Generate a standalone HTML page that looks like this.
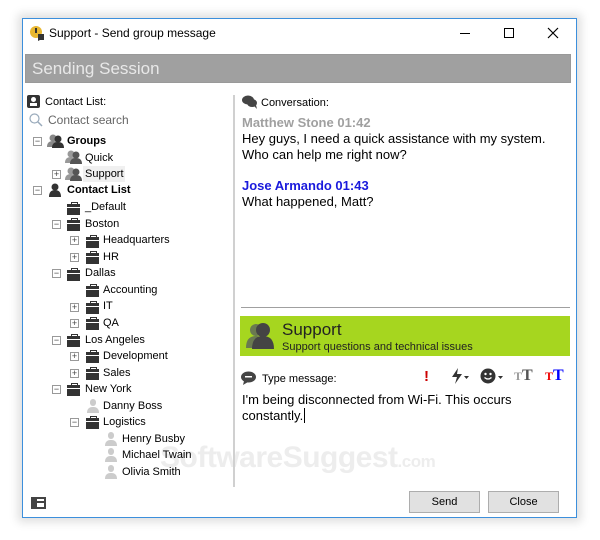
<!DOCTYPE html>
<html><head><style>
*{margin:0;padding:0;box-sizing:border-box}
body{width:600px;height:540px;background:#fff;position:relative;overflow:hidden;font-family:"Liberation Sans","DejaVu Sans",sans-serif;color:#000}
.a{position:absolute;white-space:nowrap}
.win{position:absolute;left:22px;top:18px;width:555px;height:500px;border:1px solid #3c8fdc;background:#fff;box-shadow:0 0 9px 4px rgba(0,0,0,0.13)}
.t{font-size:11px}
.box{position:absolute;width:9px;height:9px;border:1px solid #999;background:#fff;font-size:9px;line-height:7px;text-align:center;color:#444}
.bc{position:absolute;width:13px;height:10px}
.bc:before{content:"";position:absolute;left:4px;top:0;width:5px;height:3px;border:1px solid #333;border-bottom:none}
.bc:after{content:"";position:absolute;left:0;top:2px;width:13px;height:8px;background:#333;border-top:3px solid #333;box-shadow:inset 0 1px 0 #fff}
.pc{position:absolute;width:12px;height:14px}
.pc:before{content:"";position:absolute;left:3px;top:0;width:6px;height:7px;border-radius:3px;background:#ccc}
.pc:after{content:"";position:absolute;left:0;top:8px;width:12px;height:6px;border-radius:5px 5px 0 0;background:#ccc}
.btn{position:absolute;top:491px;width:71px;height:22px;border:1px solid #adadad;background:#e1e1e1;font-size:11px;text-align:center;line-height:20px}
</style></head><body>
<div class="win"></div>
<!-- watermark -->
<div class="a" style="left:160px;top:441px;font-size:30px;font-weight:bold;color:#ededed;letter-spacing:-0.5px">SoftwareSuggest<span style="font-size:17px">.com</span></div>
<!-- title -->
<svg class="a" style="left:29px;top:25px" width="16" height="16"><circle cx="7" cy="7" r="6" fill="#e8b730"/><rect x="6" y="3" width="2" height="5" fill="#333"/><path d="M9 9h6v6h-4l-2 1z" fill="#333"/></svg>
<div class="a" style="left:49px;top:26px;font-size:12px">Support - Send group message</div>
<div class="a" style="left:460px;top:33px;width:10px;height:1px;background:#000"></div>
<div class="a" style="left:504px;top:28px;width:10px;height:10px;border:1px solid #000"></div>
<svg class="a" style="left:547px;top:27px" width="12" height="12"><path d="M1 1L11 11M11 1L1 11" stroke="#000" stroke-width="1.2"/></svg>
<!-- header bar -->
<div class="a" style="left:25px;top:54px;width:546px;height:29px;background:#a0a0a0;border:1px solid #999"></div>
<div class="a" style="left:32px;top:59px;font-size:17px;color:#e8e8e8">Sending Session</div>
<!-- left panel -->
<div class="a" style="left:27px;top:95px;width:13px;height:13px;background:#333;border-radius:2px"></div>
<div class="a" style="left:31px;top:97px;width:5px;height:5px;background:#fff;border-radius:3px"></div>
<div class="a" style="left:30px;top:103px;width:7px;height:3px;background:#fff"></div>
<div class="a t" style="left:45px;top:96px">Contact List:</div>
<svg class="a" style="left:29px;top:113px" width="14" height="14"><circle cx="5.5" cy="5.5" r="4.5" fill="none" stroke="#9ab" stroke-width="1.2"/><path d="M9 9l4 4" stroke="#9ab" stroke-width="1.5"/></svg>
<div class="a" style="left:48px;top:113px;font-size:12px;color:#666">Contact search</div>
<div class="a" style="left:233px;top:95px;width:2px;height:392px;background:#d0d0d0"></div>

<!-- tree -->
<div class="box" style="left:33px;top:137px">−</div>
<svg class="a" style="left:47px;top:134px" width="18" height="14"><circle cx="6" cy="4" r="3.5" fill="#888"/><path d="M0 13q0-6 6-6q6 0 6 6z" fill="#888"/><circle cx="11" cy="5" r="3.5" fill="#333"/><path d="M5 14q0-6 6-6q6 0 6 6z" fill="#333"/></svg>
<div class="a t" style="left:67px;top:135px;font-weight:bold">Groups</div>
<svg class="a" style="left:65px;top:150px" width="18" height="14"><circle cx="6" cy="4" r="3.5" fill="#999"/><path d="M0 13q0-6 6-6q6 0 6 6z" fill="#999"/><circle cx="11" cy="5" r="3.5" fill="#555"/><path d="M5 14q0-6 6-6q6 0 6 6z" fill="#555"/></svg>
<div class="a t" style="left:85px;top:152px">Quick</div>
<div class="box" style="left:52px;top:170px">+</div>
<svg class="a" style="left:65px;top:167px" width="18" height="14"><circle cx="6" cy="4" r="3.5" fill="#999"/><path d="M0 13q0-6 6-6q6 0 6 6z" fill="#999"/><circle cx="11" cy="5" r="3.5" fill="#555"/><path d="M5 14q0-6 6-6q6 0 6 6z" fill="#555"/></svg>
<div class="a" style="left:83px;top:166px;width:42px;height:16px;background:#f0f0f0"></div>
<div class="a t" style="left:85px;top:168px">Support</div>
<div class="box" style="left:33px;top:186px">−</div>
<svg class="a" style="left:49px;top:183px" width="12" height="14"><circle cx="6" cy="4" r="3.5" fill="#333"/><path d="M0 14q0-7 6-7q6 0 6 7z" fill="#333"/></svg>
<div class="a t" style="left:67px;top:184px;font-weight:bold">Contact List</div>

<div class="bc" style="left:67px;top:202px"></div><div class="a t" style="left:85px;top:201px">_Default</div>
<div class="box" style="left:52px;top:220px">−</div><div class="bc" style="left:67px;top:218px"></div><div class="a t" style="left:85px;top:218px">Boston</div>
<div class="box" style="left:70px;top:236px">+</div><div class="bc" style="left:86px;top:235px"></div><div class="a t" style="left:103px;top:234px">Headquarters</div>
<div class="box" style="left:70px;top:253px">+</div><div class="bc" style="left:86px;top:251px"></div><div class="a t" style="left:103px;top:251px">HR</div>
<div class="box" style="left:52px;top:269px">−</div><div class="bc" style="left:67px;top:268px"></div><div class="a t" style="left:85px;top:267px">Dallas</div>
<div class="bc" style="left:86px;top:284px"></div><div class="a t" style="left:103px;top:284px">Accounting</div>
<div class="box" style="left:70px;top:303px">+</div><div class="bc" style="left:86px;top:301px"></div><div class="a t" style="left:103px;top:300px">IT</div>
<div class="box" style="left:70px;top:319px">+</div><div class="bc" style="left:86px;top:317px"></div><div class="a t" style="left:103px;top:317px">QA</div>
<div class="box" style="left:52px;top:336px">−</div><div class="bc" style="left:67px;top:334px"></div><div class="a t" style="left:85px;top:334px">Los Angeles</div>
<div class="box" style="left:70px;top:352px">+</div><div class="bc" style="left:86px;top:350px"></div><div class="a t" style="left:103px;top:350px">Development</div>
<div class="box" style="left:70px;top:369px">+</div><div class="bc" style="left:86px;top:367px"></div><div class="a t" style="left:103px;top:367px">Sales</div>
<div class="box" style="left:52px;top:385px">−</div><div class="bc" style="left:67px;top:383px"></div><div class="a t" style="left:85px;top:383px">New York</div>
<div class="pc" style="left:87px;top:399px"></div><div class="a t" style="left:103px;top:400px">Danny Boss</div>
<div class="box" style="left:70px;top:418px">−</div><div class="bc" style="left:86px;top:416px"></div><div class="a t" style="left:103px;top:416px">Logistics</div>
<div class="pc" style="left:105px;top:432px"></div><div class="a t" style="left:122px;top:433px">Henry Busby</div>
<div class="pc" style="left:105px;top:448px"></div><div class="a t" style="left:122px;top:449px">Michael Twain</div>
<div class="pc" style="left:105px;top:465px"></div><div class="a t" style="left:122px;top:466px">Olivia Smith</div>

<div class="a" style="left:31px;top:497px;width:15px;height:12px;border:2px solid #444;border-left:6px solid #444"></div>
<div class="a" style="left:37px;top:501px;width:7px;height:2px;background:#444"></div>

<!-- conversation -->
<svg class="a" style="left:242px;top:95px" width="16" height="14"><ellipse cx="6" cy="5" rx="6" ry="4.5" fill="#444"/><ellipse cx="10" cy="8" rx="5" ry="4" fill="#444"/><path d="M12 11l3 3-1-4z" fill="#444"/></svg>
<div class="a t" style="left:261px;top:97px">Conversation:</div>
<div class="a" style="left:242px;top:115px;font-size:13px;font-weight:bold;color:#a0a0a0">Matthew Stone 01:42</div>
<div class="a" style="left:242px;top:131px;font-size:13px;line-height:16px">Hey guys, I need a quick assistance with my system.<br>Who can help me right now?</div>
<div class="a" style="left:242px;top:178px;font-size:13px;font-weight:bold;color:#1a1adc">Jose Armando 01:43</div>
<div class="a" style="left:242px;top:194px;font-size:13px">What happened, Matt?</div>
<div class="a" style="left:241px;top:307px;width:329px;height:1px;background:#a0a0a0"></div>
<!-- green -->
<div class="a" style="left:240px;top:316px;width:330px;height:40px;background:#a6d61f"></div>
<svg class="a" style="left:245px;top:321px" width="32" height="28"><circle cx="11" cy="9" r="6" fill="#6a7a50"/><path d="M1 27q0-12 10-12q10 0 10 12z" fill="#6a7a50"/><circle cx="18" cy="9" r="7" fill="#444"/><path d="M7 28q0-13 11-13q11 0 11 13z" fill="#444"/></svg>
<div class="a" style="left:282px;top:320px;font-size:17px;color:#222">Support</div>
<div class="a" style="left:282px;top:341px;font-size:11px;color:#222">Support questions and technical issues</div>
<!-- type -->
<svg class="a" style="left:241px;top:371px" width="16" height="14"><ellipse cx="7.5" cy="6" rx="7.5" ry="5.5" fill="#444"/><path d="M3 10l-1 4 5-3z" fill="#444"/><rect x="4" y="5" width="7" height="1.5" fill="#fff"/></svg>
<div class="a t" style="left:262px;top:373px">Type message:</div>
<div class="a" style="left:424px;top:368px;font-size:15px;font-weight:bold;color:#c00">!</div>
<svg class="a" style="left:449px;top:367px" width="22" height="18"><path d="M9 1L3 10h5l-2 7 7-10H8z" fill="#333"/><path d="M15 9h5l-2.5 3z" fill="#333"/></svg>
<svg class="a" style="left:480px;top:367px" width="24" height="18"><circle cx="8" cy="9" r="7.5" fill="#333"/><circle cx="5.5" cy="7" r="1.2" fill="#fff"/><circle cx="10.5" cy="7" r="1.2" fill="#fff"/><path d="M4.5 10.5q3.5 3 7 0" stroke="#fff" stroke-width="1.3" fill="none"/><path d="M18 9h5l-2.5 3z" fill="#333"/></svg>
<div class="a" style="left:514px;top:367px;font-family:'Liberation Serif',serif;font-size:16px;font-weight:bold;color:#555"><span style="font-size:12px;color:#999">T</span>T</div>
<div class="a" style="left:545px;top:367px;font-family:'Liberation Serif',serif;font-size:16px;font-weight:bold;color:#00f"><span style="font-size:12px;color:#e00">T</span>T</div>
<div class="a" style="left:242px;top:392px;font-size:13px;line-height:16px">I'm being disconnected from Wi-Fi. This occurs<br>constantly.<span style="border-left:1px solid #000;margin-left:1px"></span></div>
<!-- buttons -->
<div class="btn" style="left:409px">Send</div>
<div class="btn" style="left:488px">Close</div>
</body></html>
